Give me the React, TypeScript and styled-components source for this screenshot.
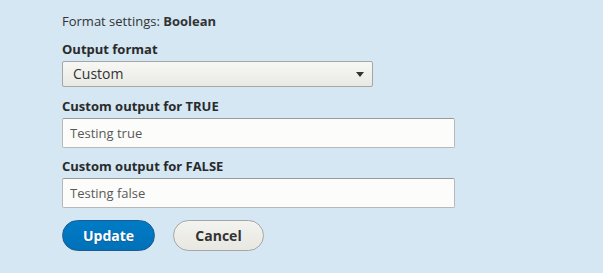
import { createGlobalStyle } from 'styled-components'
import styled from 'styled-components'

const GlobalStyle = createGlobalStyle`
  html, body {
    margin: 0;
    padding: 0;
    background: #d4e7f3;
  }
  body {
    font-family: "Open Sans", "DejaVu Sans", sans-serif;
    color: #333;
    font-size: 13px;
  }
`

const Page = styled.div`
  width: 603px;
  height: 273px;
  padding: 12px 0 0 62px;
  box-sizing: border-box;
  background: #d4e7f3;
`

const Summary = styled.div`
  font-size: 13px;
  color: #333;
  line-height: 18px;
  margin-bottom: 10px;

  strong {
    font-weight: 700;
  }
`

const Field = styled.div<{ $gap?: number }>`
  margin-bottom: ${p => p.$gap ?? 9}px;
`

const Label = styled.label`
  display: block;
  font-weight: 700;
  font-size: 13px;
  line-height: 18px;
  margin-bottom: 3px;
  color: #2a2a2a;
`

const SelectBox = styled.div`
  position: relative;
  width: 311px;
  height: 26px;
  box-sizing: border-box;
  border: 1px solid #a6a6a6;
  border-radius: 2px;
  background: linear-gradient(#f7f7f4, #e9e9e4);
  font-size: 14px;
  line-height: 24px;
  padding-left: 10px;
  color: #333;
`

const Arrow = styled.span`
  position: absolute;
  right: 8px;
  top: 10px;
  width: 0;
  height: 0;
  border-left: 4px solid transparent;
  border-right: 4px solid transparent;
  border-top: 5px solid #333;
`

const TextInput = styled.input`
  display: block;
  width: 393px;
  height: 30px;
  box-sizing: border-box;
  border: 1px solid #b8b8b8;
  border-top-color: #999;
  border-radius: 2px;
  background: #fcfcfa;
  font-family: inherit;
  font-size: 13px;
  color: #595959;
  padding: 0 7px;
  outline: none;
`

const Actions = styled.div`
  display: flex;
  gap: 18px;
  margin-top: 12px;
`

const Button = styled.button<{ $primary?: boolean }>`
  height: 31px;
  box-sizing: border-box;
  padding: 0 20px;
  border-radius: 20px;
  font-family: inherit;
  font-size: 14px;
  font-weight: 700;
  cursor: pointer;
  border: 1px solid ${p => (p.$primary ? '#1e5c90' : '#a6a6a6')};
  background: ${p => (p.$primary ? 'linear-gradient(#007bc6, #0071b8)' : 'linear-gradient(#f3f3ef, #e8e7e1)')};
  color: ${p => (p.$primary ? '#fff' : '#333')};
  text-shadow: ${p => (p.$primary ? '0 1px #1e5c90' : 'none')};
  width: ${p => (p.$primary ? '93px' : '91px')};
`

export default function App() {
  return (
    <>
      <GlobalStyle />
      <Page>
        <Summary>
          Format settings: <strong>Boolean</strong>
        </Summary>
        <Field $gap={10}>
          <Label>Output format</Label>
          <SelectBox>
            Custom
            <Arrow />
          </SelectBox>
        </Field>
        <Field>
          <Label>Custom output for TRUE</Label>
          <TextInput defaultValue="Testing true" />
        </Field>
        <Field>
          <Label>Custom output for FALSE</Label>
          <TextInput defaultValue="Testing false" />
        </Field>
        <Actions>
          <Button $primary>Update</Button>
          <Button>Cancel</Button>
        </Actions>
      </Page>
    </>
  )
}
